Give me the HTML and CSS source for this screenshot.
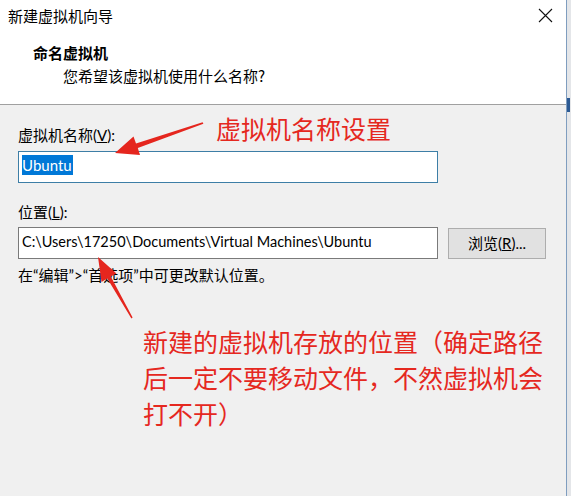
FILE: index.html
```html
<!DOCTYPE html>
<html lang="zh-CN">
<head>
<meta charset="utf-8">
<title>新建虚拟机向导</title>
<link rel="stylesheet" href="styles.css">
</head>
<body>
<div class="page">
  <div class="dialog">
    <div class="header">
      <div class="titlebar">
        <span class="title">新建虚拟机向导</span>
        <svg class="close" width="15" height="15" viewBox="0 0 15 15"><path d="M1 1 L14 14 M14 1 L1 14" stroke="#111" stroke-width="1.1" fill="none"/></svg>
      </div>
      <div class="h-title">命名虚拟机</div>
      <div class="h-sub">您希望该虚拟机使用什么名称?</div>
    </div>
    <div class="content">
      <div class="label">虚拟机名称(<u>V</u>):</div>
      <div class="field focused"><span class="sel">Ubuntu</span></div>
      <div class="label label2">位置(<u>L</u>):</div>
      <div class="row">
        <div class="field path">C:\Users\17250\Documents\Virtual Machines\Ubuntu</div>
        <div class="button">浏览(<u>R</u>)...</div>
      </div>
      <div class="hint">在“编辑”&gt;“首选项”中可更改默认位置。</div>
    </div>

    <div class="note note1">虚拟机名称设置</div>
    <div class="note note2">新建的虚拟机存放的位置（确定路径后一定不要移动文件，不然虚拟机会打不开）</div>
    <svg class="arrows" width="566" height="496" viewBox="0 0 566 496">
      <polygon fill="#e5261e" points="115,153 140,155 137.8,148 203.4,123.8 202.6,122.2 136,143.5 133.5,136.5"/>
      <polygon fill="#e5261e" points="98,257 101.5,282 107.3,278.5 131.4,318.4 132.6,317.6 110.8,276.4 116.5,273.5"/>
    </svg>
  </div>
  <div class="edge"><div class="edge-mark"></div></div>
</div>
</body>
</html>
```

FILE: styles.css
```css
html, body {
  margin: 0;
  padding: 0;
}
body {
  background: #f0f0f0;
  font-family: "Noto Sans CJK SC", sans-serif;
  color: #000;
}
.page {
  display: flex;
  width: 571px;
  height: 496px;
  overflow: hidden;
}
.dialog {
  position: relative;
  width: 566px;
  flex: none;
  background: #f0f0f0;
  border-right: 1px solid #7f9dbf;
}
.edge {
  flex: 1;
  background: #e4e6e9;
  padding-top: 98px;
}
.edge-mark {
  height: 14px;
  background: #2c5a94;
  width: 3px;
}
.header {
  background: #fff;
  height: 104px;
  border-bottom: 1px solid #a0a0a0;
}
.titlebar {
  height: 32px;
  display: flex;
  align-items: center;
  justify-content: space-between;
  padding: 0 13px 0 8px;
}
.title {
  font-size: 15px;
  line-height: 32px;
}
.close {
  margin-top: -1px;
}
.h-title {
  margin: 9px 0 0 33px;
  font-size: 15px;
  font-weight: bold;
  line-height: 23px;
}
.h-sub {
  margin-left: 63px;
  font-size: 15px;
  line-height: 23px;
}
.content {
  padding: 20px 18px 0 18px;
  font-size: 15px;
  font-family: "Lato", "Noto Sans CJK SC", sans-serif;
}
.label {
  line-height: 20px;
}
.label2 {
  margin-top: 19px;
}
.field {
  box-sizing: border-box;
  width: 420px;
  height: 32px;
  margin-top: 6px;
  background: #fff;
  border: 1px solid #7a7a7a;
  padding: 0 3px;
  line-height: 28px;
  font-size: 15px;
  white-space: nowrap;
  overflow: hidden;
}
.field.path {
  font-size: 14.5px;
}
.field.focused {
  border-color: #3d7ea6;
  padding-top: 3px;
  line-height: 20px;
}
.sel {
  display: inline-block;
  background: #0078d7;
  color: #fff;
  line-height: 20px;
  padding: 0 1px 0 0;
}
.row {
  display: flex;
  align-items: flex-start;
  gap: 10px;
  margin-top: 5px;
}
.row .field {
  margin-top: 0;
}
.button {
  box-sizing: border-box;
  width: 98px;
  height: 31px;
  margin-top: 1px;
  background: #e1e1e1;
  border: 1px solid #adadad;
  text-align: center;
  line-height: 28px;
  font-size: 15px;
}
.hint {
  margin-top: 6px;
  line-height: 20px;
}
.note {
  position: absolute;
  color: #e5281f;
  font-size: 25px;
}
.note1 {
  left: 216px;
  top: 111px;
  line-height: 34px;
}
.note2 {
  left: 143px;
  top: 323px;
  width: 410px;
  line-height: 36px;
}
.arrows {
  position: absolute;
  left: 0;
  top: 0;
  pointer-events: none;
}
```
